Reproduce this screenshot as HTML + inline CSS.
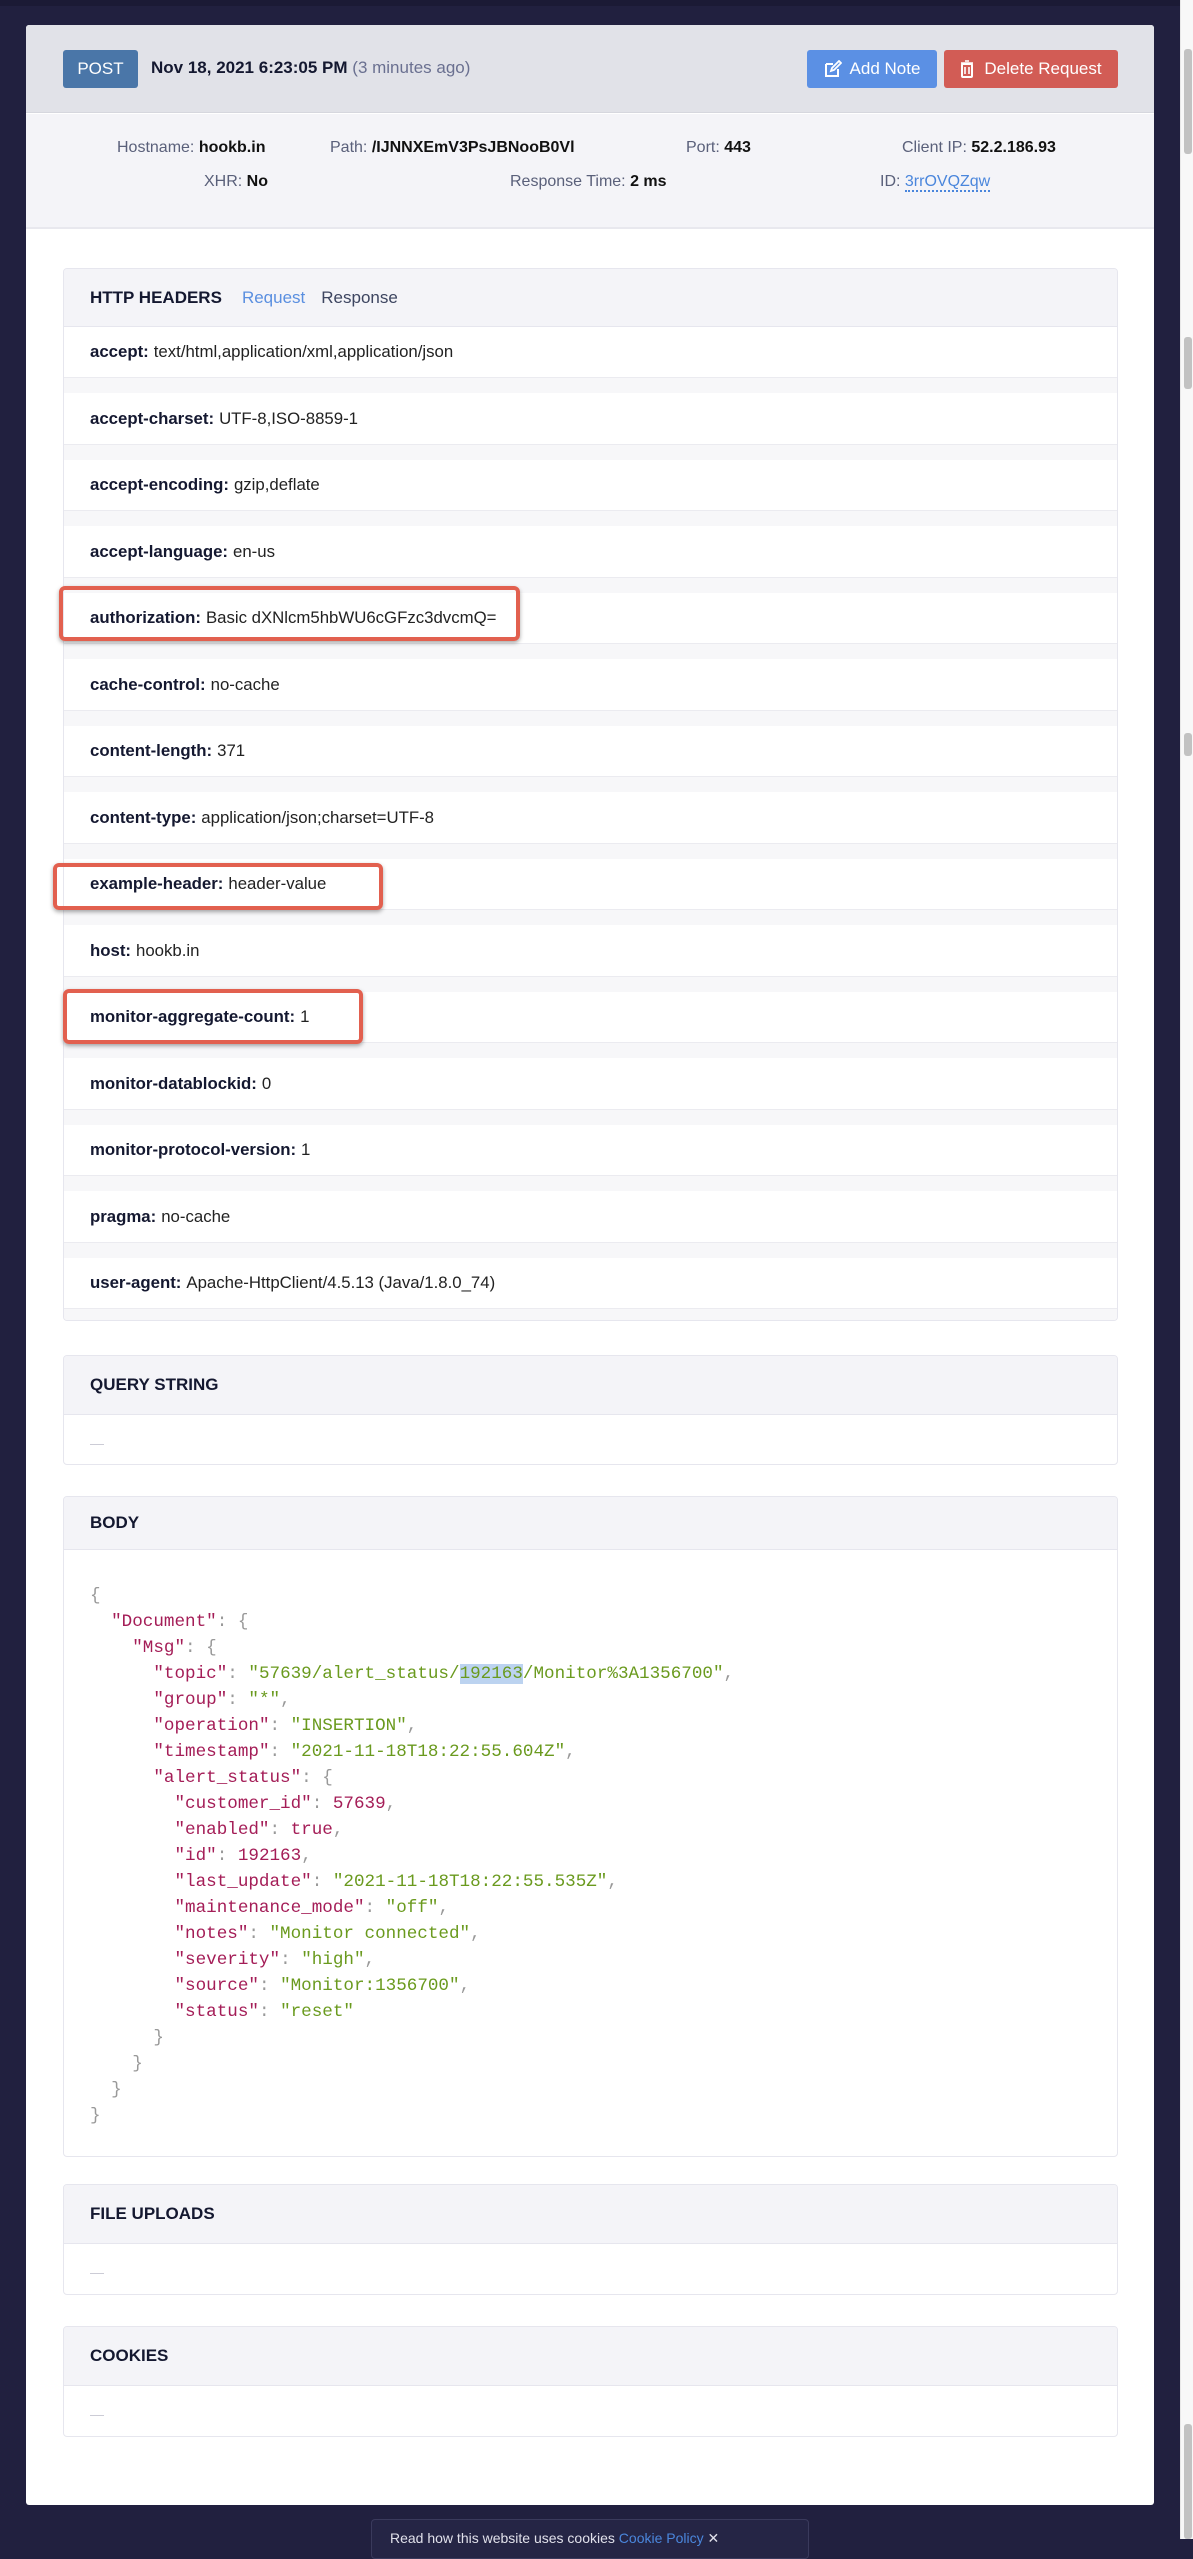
<!DOCTYPE html>
<html><head><meta charset="utf-8">
<style>
*{margin:0;padding:0;box-sizing:border-box}
body{width:1193px;height:2539px;background:#21203f;font-family:"Liberation Sans",sans-serif;position:relative;overflow:hidden;color:#141830}
.abs{position:absolute}
.track{left:1180px;top:0;width:13px;height:2539px;background:#f8f8f8;border-left:1px solid #e8e8e8}
.thumb{left:1184px;width:8px;background:#c2c2c2;border-radius:3px}
.card{left:26px;top:25px;width:1128px;height:2480px;background:#fff;border-radius:3px}
.topbar{left:26px;top:25px;width:1128px;height:88px;background:#e1e2e8;border-radius:3px 3px 0 0;border-bottom:1px solid #d6d7de}
.info{left:26px;top:114px;width:1128px;height:115px;background:#f4f4f8;border-bottom:2px solid #e8e8ee}
.btn{height:38px;border-radius:3px;color:#fff;font-size:17px;display:flex;align-items:center;justify-content:center;top:50px}
.lbl{color:#5a607a;font-size:16px;white-space:nowrap}
.lbl b{color:#111;font-weight:bold}
.panel{left:63px;width:1055px;border:1px solid #e6e6ee;border-radius:4px;background:#fff;overflow:hidden}
.ph{background:#f4f4f8;border-bottom:1px solid #e6e6ee;height:59px;display:flex;align-items:center;padding-left:26px;font-weight:bold;font-size:17px;color:#141830}
.row{position:absolute;left:0;width:1055px;height:51px;background:#fff;border-bottom:1px solid #ebebf0;display:flex;align-items:center;padding-left:26px;font-size:16.8px;color:#222}
.row b{color:#141830;margin-right:5px}
.gap{position:absolute;left:0;width:1055px;height:15px;background:#f7f7f9}
.hl{position:absolute;border:4px solid #e2604f;border-radius:6px;box-shadow:0 2px 4px rgba(0,0,0,.35)}
.dash{color:#c8c8d4;font-size:14px;padding:20px 26px}
pre{font-family:"Liberation Mono",monospace;font-size:17.6px;line-height:26px;color:#999}
.k{color:#a41d57}.s{color:#6a9a1e}.n{color:#a41d57}
</style></head><body>
<div class="abs track"></div>
<div class="abs thumb" style="top:49px;height:105px"></div>
<div class="abs thumb" style="top:337px;height:52px"></div>
<div class="abs thumb" style="top:733px;height:23px"></div>
<div class="abs thumb" style="top:2424px;height:115px"></div>
<div class="abs" style="left:0;top:0;width:1180px;height:6px;background:#1b1a35"></div>

<div class="abs card"></div>
<div class="abs topbar"></div>
<div class="abs" style="left:63px;top:50px;width:75px;height:38px;background:#4a76a8;border-radius:3px;color:#fff;font-size:17px;display:flex;align-items:center;justify-content:center">POST</div>
<div class="abs" style="left:151px;top:58px;font-size:17px;font-weight:bold;color:#141830;white-space:nowrap">Nov 18, 2021 6:23:05 PM <span style="font-weight:normal;color:#6a7090">(3 minutes ago)</span></div>
<div class="abs btn" style="left:807px;width:130px;background:#5b90e4"><svg width="18" height="18" viewBox="0 0 18 18" style="margin-right:8px"><path d="M2 4h7M2 4v12h12V9" fill="none" stroke="#fff" stroke-width="2"/><path d="M7 11l1-3 7-7 2 2-7 7z" fill="none" stroke="#fff" stroke-width="1.8"/></svg>Add Note</div>
<div class="abs btn" style="left:944px;width:174px;background:#d25c55"><svg width="14" height="18" viewBox="0 0 14 18" style="margin-right:10px"><rect x="2" y="4" width="10" height="13" rx="1" fill="none" stroke="#fff" stroke-width="2"/><path d="M1 3h12M5 1h4M5 7v7M9 7v7" stroke="#fff" stroke-width="1.6"/></svg>Delete Request</div>

<div class="abs info"></div>
<div class="abs lbl" style="left:117px;top:139px">Hostname: <b>hookb.in</b></div>
<div class="abs lbl" style="left:330px;top:139px">Path: <b>/IJNNXEmV3PsJBNooB0Vl</b></div>
<div class="abs lbl" style="left:686px;top:139px">Port: <b>443</b></div>
<div class="abs lbl" style="left:902px;top:139px">Client IP: <b>52.2.186.93</b></div>
<div class="abs lbl" style="left:204px;top:173px">XHR: <b>No</b></div>
<div class="abs lbl" style="left:510px;top:173px">Response Time: <b>2 ms</b></div>
<div class="abs lbl" style="left:880px;top:173px">ID: <span style="color:#4a86dc;border-bottom:2px dotted #4a86dc">3rrOVQZqw</span></div>

<div class="abs panel" style="top:268px;height:1053px">
 <div class="ph" style="height:58px">HTTP HEADERS <span style="color:#5a8fe0;font-weight:normal;margin-left:20px">Request</span><span style="color:#3d4560;font-weight:normal;margin-left:16px">Response</span></div>
 <div class="row" style="top:58px"><b>accept:</b>text/html,application/xml,application/json</div><div class="gap" style="top:109px"></div>
 <div class="row" style="top:124.5px"><b>accept-charset:</b>UTF-8,ISO-8859-1</div><div class="gap" style="top:175.5px"></div>
 <div class="row" style="top:191px"><b>accept-encoding:</b>gzip,deflate</div><div class="gap" style="top:242px"></div>
 <div class="row" style="top:257.5px"><b>accept-language:</b>en-us</div><div class="gap" style="top:308.5px"></div>
 <div class="row" style="top:324px"><b>authorization:</b>Basic dXNlcm5hbWU6cGFzc3dvcmQ=</div><div class="gap" style="top:375px"></div>
 <div class="row" style="top:390.5px"><b>cache-control:</b>no-cache</div><div class="gap" style="top:441.5px"></div>
 <div class="row" style="top:457px"><b>content-length:</b>371</div><div class="gap" style="top:508px"></div>
 <div class="row" style="top:523.5px"><b>content-type:</b>application/json;charset=UTF-8</div><div class="gap" style="top:574.5px"></div>
 <div class="row" style="top:590px"><b>example-header:</b>header-value</div><div class="gap" style="top:641px"></div>
 <div class="row" style="top:656.5px"><b>host:</b>hookb.in</div><div class="gap" style="top:707.5px"></div>
 <div class="row" style="top:723px"><b>monitor-aggregate-count:</b>1</div><div class="gap" style="top:774px"></div>
 <div class="row" style="top:789.5px"><b>monitor-datablockid:</b>0</div><div class="gap" style="top:840.5px"></div>
 <div class="row" style="top:856px"><b>monitor-protocol-version:</b>1</div><div class="gap" style="top:907px"></div>
 <div class="row" style="top:922.5px"><b>pragma:</b>no-cache</div><div class="gap" style="top:973.5px"></div>
 <div class="row" style="top:989px"><b>user-agent:</b>Apache-HttpClient/4.5.13 (Java/1.8.0_74)</div><div class="gap" style="top:1040px"></div>
</div>
<div class="hl" style="left:59px;top:586px;width:461px;height:55px"></div>
<div class="hl" style="left:53px;top:863px;width:330px;height:47px"></div>
<div class="hl" style="left:63px;top:989px;width:300px;height:55px"></div>

<div class="abs panel" style="top:1355px;height:110px"><div class="ph">QUERY STRING</div><div class="dash">—</div></div>

<div class="abs panel" style="top:1496px;height:661px"><div class="ph" style="height:53px">BODY</div>
<pre style="padding:33px 0 0 26px">{
  <span class="k">"Document"</span>: {
    <span class="k">"Msg"</span>: {
      <span class="k">"topic"</span>: <span class="s">"57639/alert_status/<span style="background:#bcd3f0">192163</span>/Monitor%3A1356700"</span>,
      <span class="k">"group"</span>: <span class="s">"*"</span>,
      <span class="k">"operation"</span>: <span class="s">"INSERTION"</span>,
      <span class="k">"timestamp"</span>: <span class="s">"2021-11-18T18:22:55.604Z"</span>,
      <span class="k">"alert_status"</span>: {
        <span class="k">"customer_id"</span>: <span class="n">57639</span>,
        <span class="k">"enabled"</span>: <span class="n">true</span>,
        <span class="k">"id"</span>: <span class="n">192163</span>,
        <span class="k">"last_update"</span>: <span class="s">"2021-11-18T18:22:55.535Z"</span>,
        <span class="k">"maintenance_mode"</span>: <span class="s">"off"</span>,
        <span class="k">"notes"</span>: <span class="s">"Monitor connected"</span>,
        <span class="k">"severity"</span>: <span class="s">"high"</span>,
        <span class="k">"source"</span>: <span class="s">"Monitor:1356700"</span>,
        <span class="k">"status"</span>: <span class="s">"reset"</span>
      }
    }
  }
}</pre></div>

<div class="abs panel" style="top:2184px;height:111px"><div class="ph">FILE UPLOADS</div><div class="dash">—</div></div>
<div class="abs panel" style="top:2326px;height:111px"><div class="ph">COOKIES</div><div class="dash">—</div></div>

<div class="abs" style="left:371px;top:2519px;width:438px;height:40px;background:#252545;border:1px solid #3a3a5c;border-radius:4px;color:#e0e0ea;font-size:14px;padding:10px 18px;white-space:nowrap">Read how this website uses cookies <span style="color:#4a86dc">Cookie Policy</span> ✕</div>
</body></html>
